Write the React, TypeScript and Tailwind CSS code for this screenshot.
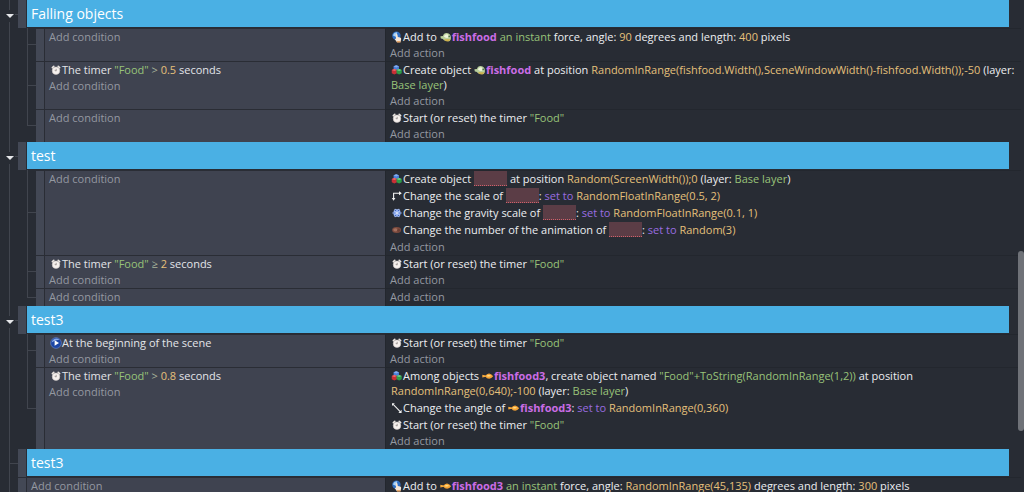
import { useState, type ReactNode } from 'react';

const iconClass = 'inline-block size-3 align-[-2px]';

function ClockIcon() {
  return (
    <svg className={iconClass} viewBox="-1 -1 14 14" aria-hidden="true">
      <path d="M1.8 3.2 3.4 1.8M10.2 3.2 8.6 1.8" stroke="#e9e4e0" strokeWidth="2" strokeLinecap="round" />
      <circle cx="6" cy="6.8" r="4.4" fill="#f6f1ee" stroke="#cfc8c4" strokeWidth=".6" />
      <path d="M6.2 4.6v2.6L4.4 6.4" stroke="#8a8280" strokeWidth=".9" fill="none" />
    </svg>
  );
}

function CubesIcon() {
  return (
    <svg className={iconClass} viewBox="0 -.5 13 13" aria-hidden="true">
      <path d="M5.6.8 8.6 2v3.6L5.6 6.8 2.8 5.6V2z" fill="#4a7fd8" />
      <path d="M5.6.8 8.6 2 5.6 3.3 2.8 2z" fill="#86aef0" />
      <path d="M3.6 4.8 6.4 6v3.6l-2.8 1.2L.8 9.6V6z" fill="#c92f35" />
      <path d="M3.6 4.8 6.4 6 3.6 7.2.8 6z" fill="#ec6a6c" />
      <path d="M8.8 4.8 11.6 6v3.6l-2.8 1.2L6 9.6V6z" fill="#2d9c48" />
      <path d="M8.8 4.8 11.6 6 8.8 7.2 6 6z" fill="#72d286" />
    </svg>
  );
}

function ForceIcon() {
  return (
    <svg className={iconClass} viewBox="0 0 12 12" aria-hidden="true">
      <circle cx="5.4" cy="4.8" r="4.2" fill="#2f6fc4" />
      <path d="M2 4.6Q3 1 6.4 1.3L5.2 6z" fill="#a9d2f5" />
      <path d="M4.8 3.2c.8-.6 1.6-.2 1.7.7l.3 2.2 2.3.5c.9.3 1.2.9 1 1.8l-.6 2.9H5.9L4 8.6c-.3-.8.4-1.1 1-.8z" fill="#f5e6d6" />
      <path d="M5.9 10.2h3.6v1.3H5.9z" fill="#e2964e" />
    </svg>
  );
}

function ScaleIcon() {
  return (
    <svg className={iconClass} viewBox="0 0 12 12" aria-hidden="true">
      <path d="M2.6 9V3.2h6" stroke="#f2f2f2" strokeWidth="1.1" fill="none" />
      <path d="M8 1.2 10.8 3.2 8 5.2zM.8 8h3.6L2.6 10.8z" fill="#f2f2f2" />
    </svg>
  );
}

function PhysicsIcon() {
  return (
    <svg className={iconClass} viewBox="-1 -1 14 14" aria-hidden="true">
      <circle cx="6" cy="6" r="4.2" fill="#3d63c4" />
      <g fill="none" stroke="#a9c2f7" strokeWidth="1">
        <ellipse cx="6" cy="6" rx="5" ry="2" />
        <ellipse cx="6" cy="6" rx="5" ry="2" transform="rotate(60 6 6)" />
        <ellipse cx="6" cy="6" rx="5" ry="2" transform="rotate(120 6 6)" />
      </g>
      <circle cx="6" cy="6" r="1.3" fill="#f0f5ff" />
    </svg>
  );
}

function AnimationIcon() {
  return (
    <svg className={iconClass} viewBox="-.5 -.5 13 13" aria-hidden="true">
      <ellipse cx="5.6" cy="6" rx="4.9" ry="3.3" fill="#7d4b3e" />
      <ellipse cx="4.4" cy="5.8" rx="2.4" ry="1.8" fill="#a4705f" />
      <ellipse cx="7.8" cy="6.2" rx="1.6" ry="1.6" fill="#6b3f34" />
    </svg>
  );
}

function AngleIcon() {
  return (
    <svg className={iconClass} viewBox="0 0 12 12" aria-hidden="true">
      <path d="M2.2 2.4l7 7.2" stroke="#f2f2f2" strokeWidth="1.1" />
      <path d="M1 1.2h2.8L1 4zM10.6 11H7.4l3.2-3.2z" fill="#f2f2f2" />
    </svg>
  );
}

function PlayIcon() {
  return (
    <svg className={iconClass} viewBox="0 0 12 12" aria-hidden="true">
      <circle cx="6" cy="6" r="5.4" fill="#1c45a4" stroke="#6f8cca" strokeWidth=".6" />
      <path d="M1.6 5.4a4.6 4.6 0 0 1 7.8-2.6Q5 3 1.6 5.4z" fill="#86a8e6" />
      <path d="M4.6 3.2 9 6 4.6 8.8z" fill="#fff" />
    </svg>
  );
}

function FoodIcon() {
  return (
    <svg className={iconClass} viewBox="0 0 12 12" aria-hidden="true">
      <path d="M.4 5.2 3 5C3.4 3 4.8 1.8 6.8 1.9c2.8.2 4 2 4.1 4.5.1 2-.6 3.6-2.2 3.8L4.4 9.6C3.4 8.6 3.2 7.8.8 7.4z" fill="#b9cf9c" />
      <path d="M3.8 5.2Q5 2.8 7.6 3.2 9.4 5 8 6.8 5.4 7.4 3.8 5.2z" fill="#eef4dc" />
      <path d="M4 8.2h6.4Q9.8 10.4 7.6 10.4 4.8 10.4 4 8.2z" fill="#cdb04c" />
      <circle cx="9.2" cy="5.4" r=".8" fill="#4c6a4a" />
    </svg>
  );
}

function FishIcon() {
  return (
    <svg className={iconClass} viewBox="0 0 12 12" aria-hidden="true">
      <path d="M.3 4.8 4 5.6v1.2L.3 7.4z" fill="#f7a93c" />
      <path d="M3 6.2Q5 3.4 7.2 3.6 9.6 4.2 11.2 6.2 9.4 8.6 7.2 8.8 4.8 8.8 3 6.2z" fill="#f5a234" />
      <path d="M4.2 6Q6.6 4 9 5.6 8 7.4 4.2 6z" fill="#ffe08a" />
    </svg>
  );
}

const Num = ({ children }: { children: ReactNode }) => <span className="text-[#e5c07b]">{children}</span>;
const Str = ({ children }: { children: ReactNode }) => <span className="text-[#98c379]">{children}</span>;
const Op = ({ children }: { children: ReactNode }) => <span className="text-[#9a6ce0]">{children}</span>;
const Obj = ({ children }: { children: ReactNode }) => <b className="font-bold text-[#cb6ce6]">{children}</b>;
const Missing = () => (
  <span className="inline-block h-[15px] w-[33px] border-b border-dotted border-[#d0606a] bg-[#5b3d46] align-bottom" />
);

function Line({ tall, children }: { tall?: boolean; children: ReactNode }) {
  return <p className={tall ? 'pb-0.5' : 'pb-px'}>{children}</p>;
}

function AddButton({ children }: { children: ReactNode }) {
  return (
    <button type="button" className="-ml-px block h-4 text-left leading-4 text-[#9498a1]">
      {children}
    </button>
  );
}

type Row = { conditions?: ReactNode; actions?: ReactNode };

function EventRow({ row, last, nested }: { row: Row; last: boolean; nested: boolean }) {
  return (
    <div className="grid min-h-[18px] grid-cols-[385fr_624fr]">
      <div className="flex">
        <div className="w-[9px]" />
        {nested ? (
          <>
            <div className="w-[18px] border-l border-[#41454e]" />
            <div className="flex w-[9px] flex-col">
              <div className="flex-1 border-b border-l border-[#41454e]" />
              <div className={last ? 'flex-1' : 'flex-1 border-l border-[#41454e]'} />
            </div>
          </>
        ) : (
          <div className="w-[9px] border-l border-[#41454e]" />
        )}
        <div className="w-[9px] border-t border-r border-[#2a2d35] bg-[#434855]" />
        <div className="flex-1 border-t border-[#2a2d35] bg-[#3f4350] pl-[5px] text-[#e3e5e9]">
          {row.conditions}
          <AddButton>Add condition</AddButton>
        </div>
      </div>
      <div className="-mr-3 border-t border-l border-[#23272e] pl-[5px] text-[#eceef1]">
        {row.actions}
        <AddButton>Add action</AddButton>
      </div>
    </div>
  );
}

function Group({ title, rows, leaf }: { title: string; rows: Row[]; leaf?: boolean }) {
  const [open, setOpen] = useState(true);
  return (
    <section>
      <div className="relative flex h-7">
        <div className="w-[9px]" />
        <div className="flex w-[9px] flex-col">
          <div className="flex-1 border-b border-l border-[#41454e]" />
          <div className="flex-1 border-l border-[#41454e]" />
        </div>
        <div className="w-[9px] border-r border-[#2a2d35] bg-[#434855]" />
        <h2 className="h-[27px] flex-1 bg-[#4ab0e4] pl-1 text-[14px] leading-[28px] font-medium text-white">{title}</h2>
        {!leaf && (
          <button
            type="button"
            aria-label={`Toggle ${title}`}
            aria-expanded={open}
            onClick={() => setOpen(!open)}
            className="absolute top-2.5 left-1 grid h-3 w-[11px] place-items-center bg-[#282c34]"
          >
            <svg viewBox="0 0 8 4" className="h-1 w-2">
              <path d="M0 0h8L4 4z" fill="#e6e7ea" />
            </svg>
          </button>
        )}
      </div>
      {open && rows.map((row, i) => <EventRow key={i} row={row} last={i === rows.length - 1} nested={!leaf} />)}
    </section>
  );
}

const resetTimer = (
  <Line>
    <ClockIcon />Start (or reset) the timer <Str>"Food"</Str>
  </Line>
);

const timer = (op: string, value: string) => (
  <Line>
    <ClockIcon />The timer <Str>"Food"</Str> <span className="text-[#a9b59c]">{op}</span> <Num>{value}</Num> seconds
  </Line>
);

const fallingRows: Row[] = [
  {
    actions: (
      <Line>
        <ForceIcon />Add to <FoodIcon /><Obj>fishfood</Obj> <Str>an instant</Str> force, angle: <Num>90</Num> degrees and length:{' '}
        <Num>400</Num> pixels
      </Line>
    ),
  },
  {
    conditions: timer('>', '0.5'),
    actions: (
      <Line>
        <CubesIcon />Create object <FoodIcon /><Obj>fishfood</Obj> at position{' '}
        <Num>RandomInRange(fishfood.Width(),SceneWindowWidth()-fishfood.Width());-50</Num> (layer: <Str>Base layer</Str>)
      </Line>
    ),
  },
  { actions: resetTimer },
];

const testRows: Row[] = [
  {
    actions: (
      <>
        <Line tall>
          <CubesIcon />Create object <Missing /> at position <Num>Random(ScreenWidth());0</Num> (layer: <Str>Base layer</Str>)
        </Line>
        <Line tall>
          <ScaleIcon />Change the scale of <Missing />: <Op>set to</Op> <Num>RandomFloatInRange(0.5, 2)</Num>
        </Line>
        <Line tall>
          <PhysicsIcon />Change the gravity scale of <Missing />: <Op>set to</Op> <Num>RandomFloatInRange(0.1, 1)</Num>
        </Line>
        <Line tall>
          <AnimationIcon />Change the number of the animation of <Missing />: <Op>set to</Op> <Num>Random(3)</Num>
        </Line>
      </>
    ),
  },
  { conditions: timer('≥', '2'), actions: resetTimer },
  {},
];

const test3Rows: Row[] = [
  {
    conditions: (
      <Line>
        <PlayIcon />At the beginning of the scene
      </Line>
    ),
    actions: resetTimer,
  },
  {
    conditions: timer('>', '0.8'),
    actions: (
      <>
        <Line tall>
          <CubesIcon />Among objects <FishIcon /><Obj>fishfood3</Obj>, create object named{' '}
          <Str>"Food"+ToString(RandomInRange(1,2))</Str> at position <Num>RandomInRange(0,640);-100</Num> (layer:{' '}
          <Str>Base layer</Str>)
        </Line>
        <Line tall>
          <AngleIcon />Change the angle of <FishIcon /><Obj>fishfood3</Obj>: <Op>set to</Op> <Num>RandomInRange(0,360)</Num>
        </Line>
        {resetTimer}
      </>
    ),
  },
];

const launchRows: Row[] = [
  {
    actions: (
      <Line>
        <ForceIcon />Add to <FishIcon /><Obj>fishfood3</Obj> <Str>an instant</Str> force, angle: <Num>RandomInRange(45,135)</Num>{' '}
        degrees and length: <Num>300</Num> pixels
      </Line>
    ),
  },
];

export default function App() {
  return (
    <main className="relative h-screen overflow-hidden bg-[#282c34] pr-[15px] font-['Open_Sans','Noto_Sans',sans-serif] text-[11px] leading-[15px]">
      <Group title="Falling objects" rows={fallingRows} />
      <Group title="test" rows={testRows} />
      <Group title="test3" rows={test3Rows} />
      <Group title="test3" rows={launchRows} leaf />
      <div className="absolute top-[51%] right-0 h-[180px] w-1.5 rounded-full bg-[#6f7278]" />
    </main>
  );
}
